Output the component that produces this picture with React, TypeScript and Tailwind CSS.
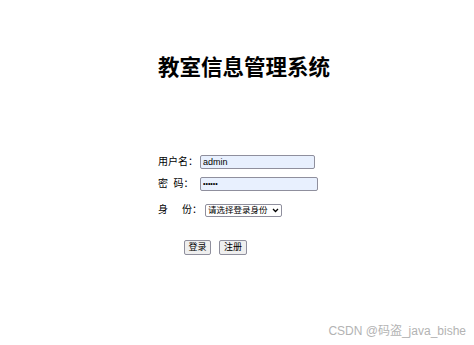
import React from "react";

const cjk = { fontFamily: '"Liberation Sans", "Noto Sans CJK SC", sans-serif' };

export default function App() {
  return (
    <div className="relative w-[474px] h-[345px] bg-white text-black" style={cjk}>
      <div className="pt-[55px] pl-[158px]">
        <h1 className="text-[21.5px] leading-[26px] font-bold">教室信息管理系统</h1>
      </div>

      <div className="pl-[158px] pt-[74px] flex flex-col text-[10px] leading-[14px]">
        <div className="flex items-center h-[14px]">
          <span className="w-[42px]">用户名：</span>
          <input
            readOnly
            value="admin"
            className="w-[115px] h-[14px] border border-[#8f8f9d] rounded-[2px] bg-[#e8f0fe] px-[2px] text-[9px] outline-none"
          />
        </div>
        <div className="flex items-center h-[14px] mt-[8px]">
          <span className="w-[42px]">密&nbsp;&nbsp;码：</span>
          <input
            readOnly
            type="password"
            value="123456"
            className="w-[118px] h-[14px] border border-[#8f8f9d] rounded-[2px] bg-[#e8f0fe] px-[2px] text-[7px] outline-none"
          />
        </div>
        <div className="flex items-center h-[14px] mt-[12px]">
          <span className="w-[47px]">身&nbsp;&nbsp;&nbsp;&nbsp;&nbsp;份：</span>
          <div className="flex items-center gap-[2px] w-[77px] h-[13px] border border-[#8f8f9d] rounded-[2px] bg-white px-[2px] text-[8.5px] leading-[11px]">
            <span className="flex-1 whitespace-nowrap">请选择登录身份</span>
            <svg width="7" height="5" viewBox="0 0 7 5" className="shrink-0">
              <path d="M1 1 L3.5 3.5 L6 1" fill="none" stroke="#000" strokeWidth="1.3" />
            </svg>
          </div>
        </div>
        <div className="flex items-center gap-[8px] mt-[23px] pl-[26px]">
          <button className="h-[15px] w-[27px] border border-[#8f8f9d] rounded-[2px] bg-[#efefef] text-[9px] leading-[13px]">
            登录
          </button>
          <button className="h-[15px] w-[28px] border border-[#8f8f9d] rounded-[2px] bg-[#efefef] text-[9px] leading-[13px]">
            注册
          </button>
        </div>
      </div>

      <div className="absolute right-[8px] bottom-[7px] text-[12px] leading-[14px] text-[#b3b3b3]">
        CSDN @码盗_java_bishe
      </div>
    </div>
  );
}
